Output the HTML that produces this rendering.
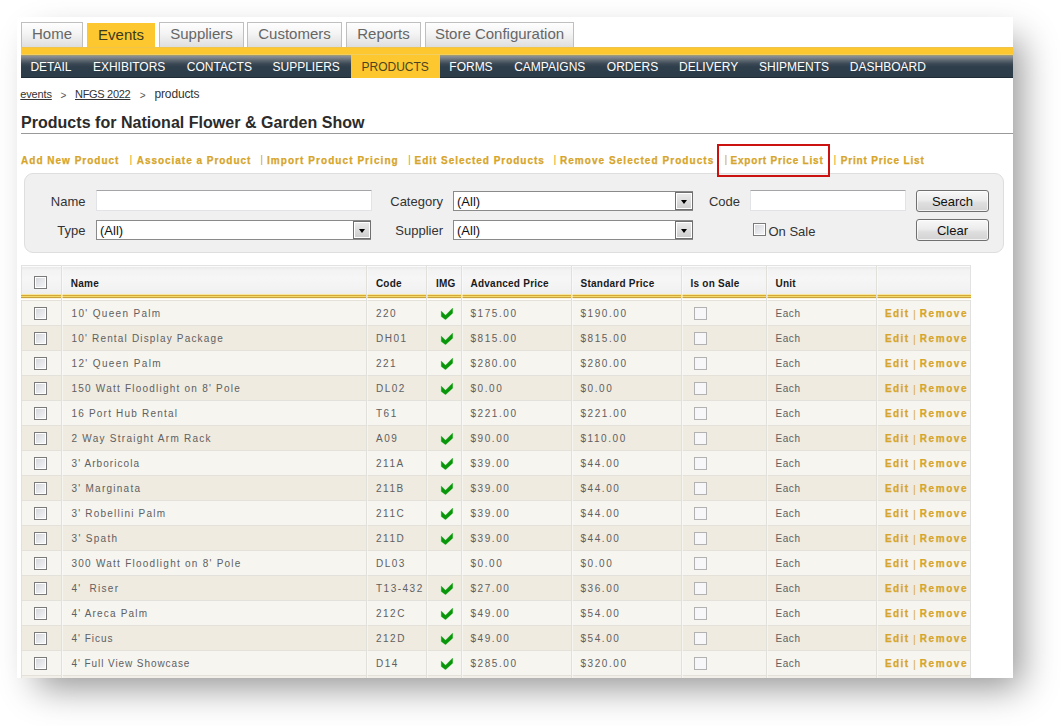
<!DOCTYPE html>
<html><head><meta charset="utf-8">
<style>
*{margin:0;padding:0;box-sizing:border-box}
html,body{width:1061px;height:726px;overflow:hidden;background:#fff}
body{font-family:"Liberation Sans",sans-serif;position:relative}
body>div,body>svg{position:absolute}
#page{left:17px;top:17px;width:996px;height:661px;background:#fff;box-shadow:14px 16px 34px -6px rgba(0,0,0,0.42)}
.tab{top:22px;height:25px;border:1px solid #bfbfbf;border-bottom:none;background:linear-gradient(#fefefe 0%,#f4f4f4 45%,#dedede 100%);color:#666;font-size:15px;line-height:22px;text-align:center}
.tab.on{background:#fdc82f;border-color:#fdc82f;color:#3b3a1e;top:23px;height:24px;line-height:21px}
#ybar{left:21px;top:47px;width:992px;height:8px;background:linear-gradient(#eec44c 0,#eec44c 1px,#fdc82f 1px,#fdc82f 7px,#f2cf60 7px)}
#nav{left:21px;top:55px;width:992px;height:23px;background:linear-gradient(#a09a70 0px,#a09a70 1px,#8e9298 1px,#7b8087 3px,#56616b 6px,#3a4854 9px,#2f3e4b 12px,#2d3c49 22px,#1f2b36 22px,#1f2b36 23px)}
.nhl{left:351px;top:55px;width:89px;height:23px;background:#fdc82f}
.ni{top:55px;height:23px;color:#fff;font-size:12px;line-height:24px}
.ni.on{color:#4a4520}
.bc{top:87px;font-size:11px;line-height:14px;color:#333;white-space:nowrap}
.bc u{text-decoration:underline}
.bc.gt{font-size:10px;color:#555;top:88.5px}
#title{left:21px;top:113px;font-size:16px;font-weight:bold;color:#2b2b2b;line-height:20px;white-space:nowrap;letter-spacing:0.03px}
#hr{left:21px;top:133px;width:992px;height:1px;background:#999}
.al{top:154px;font-size:10px;font-weight:bold;color:#d6a52a;-webkit-text-stroke:0.25px #d6a52a;line-height:13px;white-space:nowrap}
.al.pipe{font-weight:normal;letter-spacing:0;font-size:11px;top:153px;-webkit-text-stroke:0}
#redbox{left:717px;top:144px;width:113px;height:33px;border:2px solid #cc1111;z-index:5}
#panel{left:24px;top:173px;width:980px;height:80px;background:#f0f0f0;border:1px solid #dedede;border-radius:9px}
.lbl{font-size:13px;color:#333;line-height:16px;white-space:nowrap;top:0}
.inp{height:21px;background:#fff;border:1px solid #e2e3e6;border-top-color:#a3a5a8}
.sel{height:20px;background:#fff;border:1px solid #8a8a8a;font-size:13px;color:#111;line-height:19px;padding-left:3px}
.sel i{position:absolute;right:-1px;top:0;width:18px;height:18px;border:1px solid #6f6f6f;box-shadow:inset 0 0 0 1px #fff;background:linear-gradient(#ececec,#cdcdcd)}
.sel i:after{content:"";position:absolute;left:4.5px;top:6.5px;border-left:3.8px solid transparent;border-right:3.8px solid transparent;border-top:4.5px solid #000}
.cb{width:13px;height:13px;border:1px solid #7a7a7a;box-shadow:inset 0 0 0 1px #fff;background:linear-gradient(135deg,#d3d5da,#f7f7f9)}
.cb.dis{border-color:#b2b2b2;box-shadow:none;background:#f7f7f9}
.btn{width:73px;height:22px;border:1px solid #707070;border-radius:3px;box-shadow:inset 0 0 0 1px rgba(255,255,255,0.7);background:linear-gradient(#f8f8f8 0%,#ececec 45%,#dedede 60%,#d3d3d3 100%);font-size:13px;color:#111;text-align:center;line-height:21px}
#thead{left:21px;top:265px;width:950px;height:29px;border:1px solid #e2e2e2;border-bottom:none;background:linear-gradient(#fbfbfb 0px,#fbfbfb 1px,#e9e9e9 1px,#f3f3f3 4px,#f6f6f6 12px,#f3f3f3 22px,#eeeeee 28px)}
#gold{left:21px;top:294px;width:950px;height:5px;background:linear-gradient(#f8e69a 0px,#f8e69a 1px,#d4a93a 1px,#d4a93a 2px,#f2da6a 2px,#f2da6a 3px,#c9a23d 3px,#c9a23d 4px,#fbf1d8 4px)}
.vl{top:266px;width:1px;height:412px;background:#e2e0da;box-shadow:1px 0 0 rgba(255,255,255,0.45);z-index:2}
.th{top:277px;font-size:10px;font-weight:bold;color:#1a1a1a;line-height:13px;white-space:nowrap;letter-spacing:0.24px}
.tr{left:21px;width:950px;height:25px;background:#f6f5f0;border-top:1px solid #e4e1da;border-left:1px solid #e0e0e0;border-right:1px solid #e0e0e0}
.tr.alt{background:#efebe1}
.td{font-size:10px;color:#606060;letter-spacing:1.25px;line-height:28px;white-space:nowrap}
.chk{fill:#0a960a;stroke:#7ee07e;stroke-width:0.9;stroke-opacity:0.55;paint-order:stroke}
.act{font-size:10px;font-weight:bold;color:#d6a52a;-webkit-text-stroke:0.25px #d6a52a;line-height:28px;white-space:nowrap}
.act.pp{font-weight:normal;font-size:11px;color:#d9b040;-webkit-text-stroke:0}

</style></head>
<body>
<div id="page"></div>
<div class="tab" style="left:21px;width:62px">Home</div>
<div class="tab on" style="left:87px;width:68px">Events</div>
<div class="tab" style="left:159px;width:85px">Suppliers</div>
<div class="tab" style="left:247px;width:95px">Customers</div>
<div class="tab" style="left:346px;width:75px">Reports</div>
<div class="tab" style="left:425px;width:149px">Store Configuration</div>
<div id="ybar"></div>
<div id="nav"></div>
<div class="nhl"></div>
<div class="ni" style="left:30.4px">DETAIL</div>
<div class="ni" style="left:92.9px">EXHIBITORS</div>
<div class="ni" style="left:186.8px">CONTACTS</div>
<div class="ni" style="left:272.5px">SUPPLIERS</div>
<div class="ni on" style="left:361.5px">PRODUCTS</div>
<div class="ni" style="left:449.3px">FORMS</div>
<div class="ni" style="left:514.2px">CAMPAIGNS</div>
<div class="ni" style="left:606.8px">ORDERS</div>
<div class="ni" style="left:679.0px">DELIVERY</div>
<div class="ni" style="left:759.0px">SHIPMENTS</div>
<div class="ni" style="left:849.8px">DASHBOARD</div>
<div class="bc" style="left:20.3px"><u style="letter-spacing:-0.15px">events</u></div><div class="bc gt" style="left:60.5px">&gt;</div><div class="bc" style="left:75px"><u style="letter-spacing:-0.3px">NFGS 2022</u></div><div class="bc gt" style="left:139.8px">&gt;</div><div class="bc" style="left:154.5px;font-size:12px;letter-spacing:-0.15px">products</div>
<div id="title">Products for National Flower &amp; Garden Show</div>
<div id="hr"></div>
<div class="al" style="left:21.1px;letter-spacing:1.0px">Add New Product</div>
<div class="al pipe" style="left:129.5px">|</div>
<div class="al" style="left:136.7px;letter-spacing:0.975px">Associate a Product</div>
<div class="al pipe" style="left:260.3px">|</div>
<div class="al" style="left:266.9px;letter-spacing:1.07px">Import Product Pricing</div>
<div class="al pipe" style="left:408.1px">|</div>
<div class="al" style="left:414.5px;letter-spacing:0.97px">Edit Selected Products</div>
<div class="al pipe" style="left:553.5px">|</div>
<div class="al" style="left:559.9px;letter-spacing:1.06px">Remove Selected Products</div>
<div class="al pipe" style="left:724.5px">|</div>
<div class="al" style="left:730.5px;letter-spacing:0.8px">Export Price List</div>
<div class="al pipe" style="left:833.5px">|</div>
<div class="al" style="left:840.7px;letter-spacing:0.835px">Print Price List</div>
<div id="redbox"></div>
<div id="panel"></div>
<div class="lbl" style="right:975.5px;top:194px">Name</div>
<div class="lbl" style="right:975.5px;top:223px">Type</div>
<div class="lbl" style="right:618px;top:194px">Category</div>
<div class="lbl" style="right:618px;top:223px">Supplier</div>
<div class="lbl" style="right:321px;top:194px">Code</div>
<div class="inp" style="left:96px;top:190px;width:276px"></div>
<div class="inp" style="left:750px;top:190px;width:156px"></div>
<div class="sel" style="left:96px;top:220px;width:275px"><span>(All)</span><i></i></div>
<div class="sel" style="left:453px;top:191px;width:240px"><span>(All)</span><i></i></div>
<div class="sel" style="left:453px;top:220px;width:240px"><span>(All)</span><i></i></div>
<div class="cb dis2" style="left:753px;top:223px"></div><div class="lbl" style="left:768.5px;top:224px">On Sale</div>
<div class="btn" style="left:916px;top:190px">Search</div>
<div class="btn" style="left:916px;top:219px">Clear</div>
<div id="thead"></div><div id="gold"></div>
<div class="vl" style="left:61px"></div>
<div class="vl" style="left:366px"></div>
<div class="vl" style="left:426px"></div>
<div class="vl" style="left:461px"></div>
<div class="vl" style="left:571px"></div>
<div class="vl" style="left:681px"></div>
<div class="vl" style="left:766px"></div>
<div class="vl" style="left:876px"></div>
<div class="cb" style="left:34px;top:276px"></div>
<div class="th" style="left:70.8px">Name</div>
<div class="th" style="left:375.9px">Code</div>
<div class="th" style="left:436.0px">IMG</div>
<div class="th" style="left:470.5px">Advanced Price</div>
<div class="th" style="left:580.5px">Standard Price</div>
<div class="th" style="left:690.5px">Is on Sale</div>
<div class="th" style="left:775.5px">Unit</div>
<div class="tr" style="top:300px"></div>
<div class="cb" style="left:34px;top:307px"></div>
<div class="td" style="left:71.5px;top:300px;letter-spacing:1.33px">10' Queen Palm</div>
<div class="td" style="left:376.0px;top:300px;letter-spacing:1.5px">220</div>
<div class="td" style="left:470.5px;top:300px;letter-spacing:1.55px">$175.00</div>
<div class="td" style="left:580.5px;top:300px;letter-spacing:1.55px">$190.00</div>
<div class="td" style="left:775.5px;top:300px;letter-spacing:0.55px">Each</div>
<svg class="chk" style="left:440px;top:307px" width="14" height="13" viewBox="0 0 14 13"><path d="M1.2 4 L5.5 8.2 L12.7 1 L12.7 6.2 L5.5 12.8 L1.2 9.5 Z"/></svg>
<div class="cb dis" style="left:694px;top:307px"></div>
<div class="act" style="left:885px;top:300px;letter-spacing:1.4px">Edit</div><div class="act pp" style="left:913px;top:300px">|</div><div class="act" style="left:919.7px;top:300px;letter-spacing:1.6px">Remove</div>
<div class="tr alt" style="top:325px"></div>
<div class="cb" style="left:34px;top:332px"></div>
<div class="td" style="left:71.5px;top:325px;letter-spacing:1.173px">10' Rental Display Package</div>
<div class="td" style="left:376.0px;top:325px;letter-spacing:1.5px">DH01</div>
<div class="td" style="left:470.5px;top:325px;letter-spacing:1.55px">$815.00</div>
<div class="td" style="left:580.5px;top:325px;letter-spacing:1.55px">$815.00</div>
<div class="td" style="left:775.5px;top:325px;letter-spacing:0.55px">Each</div>
<svg class="chk" style="left:440px;top:332px" width="14" height="13" viewBox="0 0 14 13"><path d="M1.2 4 L5.5 8.2 L12.7 1 L12.7 6.2 L5.5 12.8 L1.2 9.5 Z"/></svg>
<div class="cb dis" style="left:694px;top:332px"></div>
<div class="act" style="left:885px;top:325px;letter-spacing:1.4px">Edit</div><div class="act pp" style="left:913px;top:325px">|</div><div class="act" style="left:919.7px;top:325px;letter-spacing:1.6px">Remove</div>
<div class="tr" style="top:350px"></div>
<div class="cb" style="left:34px;top:357px"></div>
<div class="td" style="left:71.5px;top:350px;letter-spacing:1.369px">12' Queen Palm</div>
<div class="td" style="left:376.0px;top:350px;letter-spacing:1.5px">221</div>
<div class="td" style="left:470.5px;top:350px;letter-spacing:1.55px">$280.00</div>
<div class="td" style="left:580.5px;top:350px;letter-spacing:1.55px">$280.00</div>
<div class="td" style="left:775.5px;top:350px;letter-spacing:0.55px">Each</div>
<svg class="chk" style="left:440px;top:357px" width="14" height="13" viewBox="0 0 14 13"><path d="M1.2 4 L5.5 8.2 L12.7 1 L12.7 6.2 L5.5 12.8 L1.2 9.5 Z"/></svg>
<div class="cb dis" style="left:694px;top:357px"></div>
<div class="act" style="left:885px;top:350px;letter-spacing:1.4px">Edit</div><div class="act pp" style="left:913px;top:350px">|</div><div class="act" style="left:919.7px;top:350px;letter-spacing:1.6px">Remove</div>
<div class="tr alt" style="top:375px"></div>
<div class="cb" style="left:34px;top:382px"></div>
<div class="td" style="left:71.5px;top:375px;letter-spacing:1.226px">150 Watt Floodlight on 8' Pole</div>
<div class="td" style="left:376.0px;top:375px;letter-spacing:1.5px">DL02</div>
<div class="td" style="left:470.5px;top:375px;letter-spacing:1.55px">$0.00</div>
<div class="td" style="left:580.5px;top:375px;letter-spacing:1.55px">$0.00</div>
<div class="td" style="left:775.5px;top:375px;letter-spacing:0.55px">Each</div>
<svg class="chk" style="left:440px;top:382px" width="14" height="13" viewBox="0 0 14 13"><path d="M1.2 4 L5.5 8.2 L12.7 1 L12.7 6.2 L5.5 12.8 L1.2 9.5 Z"/></svg>
<div class="cb dis" style="left:694px;top:382px"></div>
<div class="act" style="left:885px;top:375px;letter-spacing:1.4px">Edit</div><div class="act pp" style="left:913px;top:375px">|</div><div class="act" style="left:919.7px;top:375px;letter-spacing:1.6px">Remove</div>
<div class="tr" style="top:400px"></div>
<div class="cb" style="left:34px;top:407px"></div>
<div class="td" style="left:71.5px;top:400px;letter-spacing:1.196px">16 Port Hub Rental</div>
<div class="td" style="left:376.0px;top:400px;letter-spacing:1.5px">T61</div>
<div class="td" style="left:470.5px;top:400px;letter-spacing:1.55px">$221.00</div>
<div class="td" style="left:580.5px;top:400px;letter-spacing:1.55px">$221.00</div>
<div class="td" style="left:775.5px;top:400px;letter-spacing:0.55px">Each</div>
<div class="cb dis" style="left:694px;top:407px"></div>
<div class="act" style="left:885px;top:400px;letter-spacing:1.4px">Edit</div><div class="act pp" style="left:913px;top:400px">|</div><div class="act" style="left:919.7px;top:400px;letter-spacing:1.6px">Remove</div>
<div class="tr alt" style="top:425px"></div>
<div class="cb" style="left:34px;top:432px"></div>
<div class="td" style="left:71.5px;top:425px;letter-spacing:1.262px">2 Way Straight Arm Rack</div>
<div class="td" style="left:376.0px;top:425px;letter-spacing:1.5px">A09</div>
<div class="td" style="left:470.5px;top:425px;letter-spacing:1.55px">$90.00</div>
<div class="td" style="left:580.5px;top:425px;letter-spacing:1.55px">$110.00</div>
<div class="td" style="left:775.5px;top:425px;letter-spacing:0.55px">Each</div>
<svg class="chk" style="left:440px;top:432px" width="14" height="13" viewBox="0 0 14 13"><path d="M1.2 4 L5.5 8.2 L12.7 1 L12.7 6.2 L5.5 12.8 L1.2 9.5 Z"/></svg>
<div class="cb dis" style="left:694px;top:432px"></div>
<div class="act" style="left:885px;top:425px;letter-spacing:1.4px">Edit</div><div class="act pp" style="left:913px;top:425px">|</div><div class="act" style="left:919.7px;top:425px;letter-spacing:1.6px">Remove</div>
<div class="tr" style="top:450px"></div>
<div class="cb" style="left:34px;top:457px"></div>
<div class="td" style="left:71.5px;top:450px;letter-spacing:1.073px">3' Arboricola</div>
<div class="td" style="left:376.0px;top:450px;letter-spacing:1.5px">211A</div>
<div class="td" style="left:470.5px;top:450px;letter-spacing:1.55px">$39.00</div>
<div class="td" style="left:580.5px;top:450px;letter-spacing:1.55px">$44.00</div>
<div class="td" style="left:775.5px;top:450px;letter-spacing:0.55px">Each</div>
<svg class="chk" style="left:440px;top:457px" width="14" height="13" viewBox="0 0 14 13"><path d="M1.2 4 L5.5 8.2 L12.7 1 L12.7 6.2 L5.5 12.8 L1.2 9.5 Z"/></svg>
<div class="cb dis" style="left:694px;top:457px"></div>
<div class="act" style="left:885px;top:450px;letter-spacing:1.4px">Edit</div><div class="act pp" style="left:913px;top:450px">|</div><div class="act" style="left:919.7px;top:450px;letter-spacing:1.6px">Remove</div>
<div class="tr alt" style="top:475px"></div>
<div class="cb" style="left:34px;top:482px"></div>
<div class="td" style="left:71.5px;top:475px;letter-spacing:1.253px">3' Marginata</div>
<div class="td" style="left:376.0px;top:475px;letter-spacing:1.5px">211B</div>
<div class="td" style="left:470.5px;top:475px;letter-spacing:1.55px">$39.00</div>
<div class="td" style="left:580.5px;top:475px;letter-spacing:1.55px">$44.00</div>
<div class="td" style="left:775.5px;top:475px;letter-spacing:0.55px">Each</div>
<svg class="chk" style="left:440px;top:482px" width="14" height="13" viewBox="0 0 14 13"><path d="M1.2 4 L5.5 8.2 L12.7 1 L12.7 6.2 L5.5 12.8 L1.2 9.5 Z"/></svg>
<div class="cb dis" style="left:694px;top:482px"></div>
<div class="act" style="left:885px;top:475px;letter-spacing:1.4px">Edit</div><div class="act pp" style="left:913px;top:475px">|</div><div class="act" style="left:919.7px;top:475px;letter-spacing:1.6px">Remove</div>
<div class="tr" style="top:500px"></div>
<div class="cb" style="left:34px;top:507px"></div>
<div class="td" style="left:71.5px;top:500px;letter-spacing:1.208px">3' Robellini Palm</div>
<div class="td" style="left:376.0px;top:500px;letter-spacing:1.5px">211C</div>
<div class="td" style="left:470.5px;top:500px;letter-spacing:1.55px">$39.00</div>
<div class="td" style="left:580.5px;top:500px;letter-spacing:1.55px">$44.00</div>
<div class="td" style="left:775.5px;top:500px;letter-spacing:0.55px">Each</div>
<svg class="chk" style="left:440px;top:507px" width="14" height="13" viewBox="0 0 14 13"><path d="M1.2 4 L5.5 8.2 L12.7 1 L12.7 6.2 L5.5 12.8 L1.2 9.5 Z"/></svg>
<div class="cb dis" style="left:694px;top:507px"></div>
<div class="act" style="left:885px;top:500px;letter-spacing:1.4px">Edit</div><div class="act pp" style="left:913px;top:500px">|</div><div class="act" style="left:919.7px;top:500px;letter-spacing:1.6px">Remove</div>
<div class="tr alt" style="top:525px"></div>
<div class="cb" style="left:34px;top:532px"></div>
<div class="td" style="left:71.5px;top:525px;letter-spacing:1.316px">3' Spath</div>
<div class="td" style="left:376.0px;top:525px;letter-spacing:1.5px">211D</div>
<div class="td" style="left:470.5px;top:525px;letter-spacing:1.55px">$39.00</div>
<div class="td" style="left:580.5px;top:525px;letter-spacing:1.55px">$44.00</div>
<div class="td" style="left:775.5px;top:525px;letter-spacing:0.55px">Each</div>
<svg class="chk" style="left:440px;top:532px" width="14" height="13" viewBox="0 0 14 13"><path d="M1.2 4 L5.5 8.2 L12.7 1 L12.7 6.2 L5.5 12.8 L1.2 9.5 Z"/></svg>
<div class="cb dis" style="left:694px;top:532px"></div>
<div class="act" style="left:885px;top:525px;letter-spacing:1.4px">Edit</div><div class="act pp" style="left:913px;top:525px">|</div><div class="act" style="left:919.7px;top:525px;letter-spacing:1.6px">Remove</div>
<div class="tr" style="top:550px"></div>
<div class="cb" style="left:34px;top:557px"></div>
<div class="td" style="left:71.5px;top:550px;letter-spacing:1.247px">300 Watt Floodlight on 8' Pole</div>
<div class="td" style="left:376.0px;top:550px;letter-spacing:1.5px">DL03</div>
<div class="td" style="left:470.5px;top:550px;letter-spacing:1.55px">$0.00</div>
<div class="td" style="left:580.5px;top:550px;letter-spacing:1.55px">$0.00</div>
<div class="td" style="left:775.5px;top:550px;letter-spacing:0.55px">Each</div>
<div class="cb dis" style="left:694px;top:557px"></div>
<div class="act" style="left:885px;top:550px;letter-spacing:1.4px">Edit</div><div class="act pp" style="left:913px;top:550px">|</div><div class="act" style="left:919.7px;top:550px;letter-spacing:1.6px">Remove</div>
<div class="tr alt" style="top:575px"></div>
<div class="cb" style="left:34px;top:582px"></div>
<div class="td" style="left:71.5px;top:575px;letter-spacing:1.266px">4'&nbsp; Riser</div>
<div class="td" style="left:376.0px;top:575px;letter-spacing:1.5px">T13-432</div>
<div class="td" style="left:470.5px;top:575px;letter-spacing:1.55px">$27.00</div>
<div class="td" style="left:580.5px;top:575px;letter-spacing:1.55px">$36.00</div>
<div class="td" style="left:775.5px;top:575px;letter-spacing:0.55px">Each</div>
<svg class="chk" style="left:440px;top:582px" width="14" height="13" viewBox="0 0 14 13"><path d="M1.2 4 L5.5 8.2 L12.7 1 L12.7 6.2 L5.5 12.8 L1.2 9.5 Z"/></svg>
<div class="cb dis" style="left:694px;top:582px"></div>
<div class="act" style="left:885px;top:575px;letter-spacing:1.4px">Edit</div><div class="act pp" style="left:913px;top:575px">|</div><div class="act" style="left:919.7px;top:575px;letter-spacing:1.6px">Remove</div>
<div class="tr" style="top:600px"></div>
<div class="cb" style="left:34px;top:607px"></div>
<div class="td" style="left:71.5px;top:600px;letter-spacing:1.176px">4' Areca Palm</div>
<div class="td" style="left:376.0px;top:600px;letter-spacing:1.5px">212C</div>
<div class="td" style="left:470.5px;top:600px;letter-spacing:1.55px">$49.00</div>
<div class="td" style="left:580.5px;top:600px;letter-spacing:1.55px">$54.00</div>
<div class="td" style="left:775.5px;top:600px;letter-spacing:0.55px">Each</div>
<svg class="chk" style="left:440px;top:607px" width="14" height="13" viewBox="0 0 14 13"><path d="M1.2 4 L5.5 8.2 L12.7 1 L12.7 6.2 L5.5 12.8 L1.2 9.5 Z"/></svg>
<div class="cb dis" style="left:694px;top:607px"></div>
<div class="act" style="left:885px;top:600px;letter-spacing:1.4px">Edit</div><div class="act pp" style="left:913px;top:600px">|</div><div class="act" style="left:919.7px;top:600px;letter-spacing:1.6px">Remove</div>
<div class="tr alt" style="top:625px"></div>
<div class="cb" style="left:34px;top:632px"></div>
<div class="td" style="left:71.5px;top:625px;letter-spacing:0.966px">4' Ficus</div>
<div class="td" style="left:376.0px;top:625px;letter-spacing:1.5px">212D</div>
<div class="td" style="left:470.5px;top:625px;letter-spacing:1.55px">$49.00</div>
<div class="td" style="left:580.5px;top:625px;letter-spacing:1.55px">$54.00</div>
<div class="td" style="left:775.5px;top:625px;letter-spacing:0.55px">Each</div>
<svg class="chk" style="left:440px;top:632px" width="14" height="13" viewBox="0 0 14 13"><path d="M1.2 4 L5.5 8.2 L12.7 1 L12.7 6.2 L5.5 12.8 L1.2 9.5 Z"/></svg>
<div class="cb dis" style="left:694px;top:632px"></div>
<div class="act" style="left:885px;top:625px;letter-spacing:1.4px">Edit</div><div class="act pp" style="left:913px;top:625px">|</div><div class="act" style="left:919.7px;top:625px;letter-spacing:1.6px">Remove</div>
<div class="tr" style="top:650px"></div>
<div class="cb" style="left:34px;top:657px"></div>
<div class="td" style="left:71.5px;top:650px;letter-spacing:0.917px">4' Full View Showcase</div>
<div class="td" style="left:376.0px;top:650px;letter-spacing:1.5px">D14</div>
<div class="td" style="left:470.5px;top:650px;letter-spacing:1.55px">$285.00</div>
<div class="td" style="left:580.5px;top:650px;letter-spacing:1.55px">$320.00</div>
<div class="td" style="left:775.5px;top:650px;letter-spacing:0.55px">Each</div>
<svg class="chk" style="left:440px;top:657px" width="14" height="13" viewBox="0 0 14 13"><path d="M1.2 4 L5.5 8.2 L12.7 1 L12.7 6.2 L5.5 12.8 L1.2 9.5 Z"/></svg>
<div class="cb dis" style="left:694px;top:657px"></div>
<div class="act" style="left:885px;top:650px;letter-spacing:1.4px">Edit</div><div class="act pp" style="left:913px;top:650px">|</div><div class="act" style="left:919.7px;top:650px;letter-spacing:1.6px">Remove</div>
<div class="tr alt" style="top:675px;height:3px;background:#f1efe8"></div>
</body></html>
